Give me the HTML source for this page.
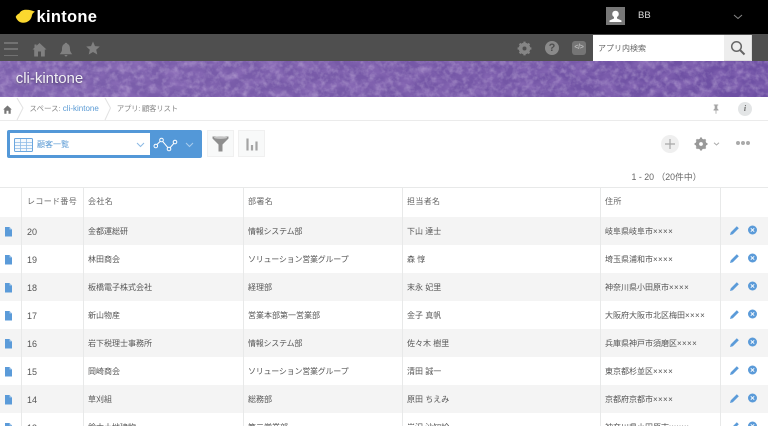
<!DOCTYPE html>
<html lang="ja"><head><meta charset="utf-8"><title>cli-kintone</title>
<style>
*{box-sizing:border-box}
html,body{margin:0;padding:0;width:768px;height:426px;overflow:hidden;background:#fff}
body{position:relative;font-family:"Liberation Sans","Noto Sans CJK JP",sans-serif;color:#555;font-size:8px;filter:blur(.35px)}
.a{position:absolute}
.t{position:absolute;white-space:nowrap;line-height:12px}
svg{position:absolute;overflow:visible}
.row{position:absolute;left:0;width:768px;height:28px}
.row.g{background:#f4f4f4}
.row .t{top:8.5px;color:#555;font-size:8px}
.row .n{font-size:9px;left:27px}
.row .k{letter-spacing:-.23px}
.row i{font-style:normal;letter-spacing:.35px}
.h{top:196px;font-size:8px;letter-spacing:.35px;color:#666}
.vl{position:absolute;top:187px;height:239px;width:1px;background:#e8e9e9}
</style></head><body>

<div class="a" style="left:0;top:0;width:768px;height:34px;background:#000"></div>
<svg style="left:15px;top:9px" width="21" height="15" viewBox="0 0 21 15"><path d="M.7 7.800C1.500 6 3 5 4.500 4.200C5.500 1.800 8.500 .6 11.500 .8C14.500 .8 17 1.400 20 2.800C18.500 3.500 17.500 4.500 17 6C16.500 10.500 13 13.800 8 13.800C4.500 13.800 1.500 11 .7 7.800Z" fill="#fbd82f"/></svg>
<div class="t" style="left:36.500px;top:6.500px;line-height:20px;color:#fff;font-size:16.500px;font-weight:700;letter-spacing:.3px">kintone</div>

<div class="a" style="left:606px;top:7px;width:19px;height:18px;background:#777"></div>
<svg style="left:606px;top:7px" width="19" height="18" viewBox="0 0 19 18"><circle cx="9.500" cy="7" r="3.300" fill="#fff"/><path d="M8 9.500V11.500L3.500 13.500V15H15.500V13.500L11 11.500V9.500Z" fill="#fff"/></svg>
<div class="t" style="left:638px;top:10px;color:#ddd;font-size:9.500px">BB</div>
<svg style="left:733px;top:14px" width="10" height="6" viewBox="0 0 10 6"><path d="M1 1L5 4.500L9 1" fill="none" stroke="#888" stroke-width="1"/></svg>

<div class="a" style="left:0;top:34px;width:768px;height:27px;background:#4f4f4f"></div>
<div class="a" style="left:4px;top:42px;width:14px;height:1.500px;background:#727272"></div>
<div class="a" style="left:4px;top:48px;width:14px;height:1.500px;background:#727272"></div>
<div class="a" style="left:4px;top:54.500px;width:14px;height:1.500px;background:#727272"></div>
<svg style="left:31.500px;top:41.500px" width="15" height="15" viewBox="0 0 15 15"><path d="M7.500 1L14.500 7.500H12.800V14.500H9V9.500H6V14.500H2.200V7.500H.5L2.500 5.600V2.500H4.500V3.800Z" fill="#808080"/></svg>
<svg style="left:59px;top:41.500px" width="14" height="15" viewBox="0 0 14 15"><path d="M7 .8C8 .8 8.300 1.300 8.300 1.900C10.500 2.600 11 4.800 11 7.500C11 9.800 12.500 11 13.300 12.300H.7C1.500 11 3 9.800 3 7.500C3 4.800 3.500 2.600 5.700 1.900C5.700 1.300 6 .8 7 .8ZM5.500 13H8.500C8.300 14 7.700 14.500 7 14.500C6.300 14.500 5.700 14 5.500 13Z" fill="#808080"/></svg>
<svg style="left:86px;top:41px" width="14" height="14" viewBox="0 0 14 14"><path d="M7 .5L9 5.100L13.800 5.500L10.200 8.700L11.300 13.500L7 11L2.700 13.500L3.800 8.700L.2 5.500L5 5.100Z" fill="#808080"/></svg>

<svg style="left:517px;top:41px" width="15" height="15" viewBox="0 0 15 15"><circle cx="7.500" cy="7.500" r="4.300" fill="none" stroke="#858585" stroke-width="3"/><path d="M7.500 .6V14.400M.6 7.500H14.400M2.600 2.600L12.400 12.400M12.400 2.600L2.600 12.400" stroke="#858585" stroke-width="2.200"/><circle cx="7.500" cy="7.500" r="2" fill="#4f4f4f"/></svg>
<div class="a" style="left:545px;top:41px;width:14px;height:14px;border-radius:50%;background:#8a8a8a;color:#4f4f4f;font-size:11px;font-weight:700;line-height:14px;text-align:center">?</div>
<div class="a" style="left:572px;top:41px;width:14px;height:14px;border-radius:3px;background:#757575;color:#bbb;font-size:7px;font-weight:700;line-height:14px;text-align:center;letter-spacing:-.3px">&lt;/&gt;</div>
<div class="a" style="left:724px;top:34.500px;width:27.500px;height:26.500px;background:#ededed;border-bottom:1px solid #ddd;border-right:1px solid #ddd"></div>
<div class="a" style="left:592.500px;top:34.500px;width:131.500px;height:26.500px;background:#fff"></div>
<div class="t" style="left:598px;top:42.500px;color:#666;font-size:8px">アプリ内検索</div>
<svg style="left:730px;top:40px" width="16" height="16" viewBox="0 0 16 16"><circle cx="6.500" cy="6.500" r="4.800" fill="none" stroke="#666" stroke-width="1.500"/><path d="M10 10L14.500 14.500" stroke="#666" stroke-width="2"/></svg>

<div class="a" style="left:0;top:61px;width:768px;height:36px;overflow:hidden">
<svg style="left:0;top:0" width="768" height="36"><defs><linearGradient id="lg" x1="0" x2="1" y1="0" y2="0"><stop offset="0" stop-color="#7c60ac"/><stop offset=".55" stop-color="#7658a7"/><stop offset="1" stop-color="#6d4fa3"/></linearGradient><filter id="f" x="0" y="0" width="100%" height="100%"><feTurbulence type="fractalNoise" baseFrequency=".06 .1" numOctaves="4" seed="7"/><feColorMatrix values="0 0 0 0 .36  0 0 0 0 .22  0 0 0 0 .58  1 0 0 0 -.38"/></filter><filter id="f2" x="0" y="0" width="100%" height="100%"><feTurbulence type="fractalNoise" baseFrequency=".16" numOctaves="3" seed="21"/><feColorMatrix values="0 0 0 0 .62  0 0 0 0 .52  0 0 0 0 .76  .9 0 0 0 -.38"/></filter></defs><rect width="768" height="36" fill="url(#lg)"/><rect width="768" height="36" filter="url(#f)"/><rect width="768" height="36" filter="url(#f2)"/></svg>
</div>
<div class="t" style="left:15.700px;top:68.500px;line-height:19px;color:#f2f0f6;font-size:15px;text-shadow:0 1px 2px rgba(0,0,0,.4)">cli-kintone</div>

<div class="a" style="left:0;top:97px;width:768px;height:24px;background:#fff;border-bottom:1px solid #ebebeb"></div>
<svg style="left:3px;top:104.500px" width="9" height="9" viewBox="0 0 9 9"><path d="M4.500 .5L8.800 4.500H7.700V8.700H5.500V5.700H3.500V8.700H1.300V4.500H.2Z" fill="#777"/></svg>
<svg style="left:15px;top:97px" width="100" height="24" viewBox="0 0 100 24"><path d="M2 1L8 11L2 23M90 1L95.500 11L90 23" fill="none" stroke="#e2e2e2"/></svg>
<div class="t" style="left:29.500px;top:103px;color:#888;font-size:7.500px">スペース: <span style="color:#5b9bd5;font-size:8px">cli-kintone</span></div>
<div class="t" style="left:116.700px;top:103px;color:#888;font-size:7.500px;letter-spacing:-.3px">アプリ: 顧客リスト</div>
<svg style="left:712.500px;top:104px" width="6" height="10" viewBox="0 0 6 10"><path d="M.8 .5H5.200V1.500H4.300V4.500L5.500 5.800V6.500H3.400V9.800H2.600V6.500H.5V5.800L1.700 4.500V1.500H.8Z" fill="#a5a5a5"/></svg>
<div class="a" style="left:738px;top:102px;width:14px;height:14px;border-radius:50%;background:#e3e5e6;color:#666;font:italic 700 8px/14px 'Liberation Serif',serif;text-align:center">i</div>

<div class="a" style="left:6.500px;top:130px;width:195.500px;height:27.500px;background:#5398d8;border-radius:2px"></div>
<div class="a" style="left:9.500px;top:133px;width:140px;height:21.500px;background:#fff"></div>
<svg style="left:14px;top:137.500px" width="19" height="14" viewBox="0 0 19 14"><rect x=".5" y=".5" width="18" height="13" rx="1" fill="#f4f9fd" stroke="#6aa6de"/><path d="M1 4.500H18M1 7.500H18M1 10.500H18M6.500 1V13M12.500 1V13" stroke="#8dbbe6" stroke-width=".8"/></svg>
<div class="t" style="left:37px;top:138.500px;color:#5b9bd5;font-size:8px">顧客一覧</div>
<svg style="left:136px;top:142px" width="9" height="6" viewBox="0 0 9 6"><path d="M1 1L4.500 4.500L8 1" fill="none" stroke="#8bb9e4"/></svg>
<svg style="left:154px;top:136px" width="24" height="16" viewBox="0 0 24 16"><path d="M1.500 10L7.500 4L15 13L21 6" fill="none" stroke="#fff"/><g fill="#5398d8" stroke="#fff"><circle cx="1.800" cy="10" r="1.800"/><circle cx="7.500" cy="4" r="1.800"/><circle cx="15" cy="13" r="1.800"/><circle cx="21" cy="6" r="1.800"/></g></svg>
<svg style="left:185px;top:142px" width="9" height="6" viewBox="0 0 9 6"><path d="M1 1L4.500 4.500L8 1" fill="none" stroke="#a9cdee"/></svg>

<div class="a" style="left:206.500px;top:130px;width:27px;height:27px;background:#f8f9f9;border:1px solid #f0f0f0"></div>
<svg style="left:211.500px;top:135px" width="17" height="17" viewBox="0 0 17 17"><path d="M.5 1.500H16.500V3.500L10.500 9.500V16.500H6.500V9.500L.5 3.500Z" fill="#8f8f8f"/><ellipse cx="8.500" cy="2.600" rx="6.500" ry="1.300" fill="#c4c4c4"/></svg>
<div class="a" style="left:238px;top:130px;width:27px;height:27px;background:#f8f9f9;border:1px solid #f0f0f0"></div>
<svg style="left:246px;top:137.500px" width="12" height="13" viewBox="0 0 12 13"><path d="M1.500 .5V12.500M6 7V12.500M10.500 3.500V12.500" stroke="#a4a4a4" stroke-width="2.200"/></svg>

<div class="a" style="left:661px;top:134.500px;width:18px;height:18px;border-radius:50%;background:#efefef"></div>
<svg style="left:665px;top:138.500px" width="10" height="10" viewBox="0 0 10 10"><path d="M5 0V10M0 5H10" stroke="#a8a8a8" stroke-width="1.200"/></svg>
<svg style="left:694px;top:136.500px" width="14" height="14" viewBox="0 0 15 15"><circle cx="7.500" cy="7.500" r="4.300" fill="none" stroke="#999" stroke-width="3"/><path d="M7.500 .6V14.400M.6 7.500H14.400M2.600 2.600L12.400 12.400M12.400 2.600L2.600 12.400" stroke="#999" stroke-width="2.200"/><circle cx="7.500" cy="7.500" r="2" fill="#fff"/></svg>
<svg style="left:712.500px;top:142px" width="7" height="4" viewBox="0 0 7 4"><path d="M1 .8L3.500 3L6 .8" fill="none" stroke="#aaa"/></svg>
<div class="a" style="left:735.600px;top:141.300px;width:4px;height:4px;border-radius:50%;background:#aaa"></div>
<div class="a" style="left:740.700px;top:141.300px;width:4px;height:4px;border-radius:50%;background:#aaa"></div>
<div class="a" style="left:745.700px;top:141.300px;width:4px;height:4px;border-radius:50%;background:#aaa"></div>

<div class="t" style="left:631.500px;top:171px;color:#666;font-size:8.800px">1 - 20 （20件中）</div>

<div class="a" style="left:0;top:187px;width:768px;height:1px;background:#e8e9e9"></div>
<div class="t h" style="left:27px">レコード番号</div>
<div class="t h" style="left:88px">会社名</div>
<div class="t h" style="left:248px">部署名</div>
<div class="t h" style="left:407px">担当者名</div>
<div class="t h" style="left:605px">住所</div>

<div class="row g" style="top:217px"><div class="t n">20</div><div class="t" style="left:88px">金都運総研</div><div class="t k" style="left:248px">情報システム部</div><div class="t" style="left:407px">下山 達士</div><div class="t" style="left:605px">岐阜県岐阜市<i>××××</i></div></div>
<div class="row" style="top:245px"><div class="t n">19</div><div class="t" style="left:88px">林田商会</div><div class="t k" style="left:248px">ソリューション営業グループ</div><div class="t" style="left:407px">森 惇</div><div class="t" style="left:605px">埼玉県浦和市<i>××××</i></div></div>
<div class="row g" style="top:273px"><div class="t n">18</div><div class="t" style="left:88px">板橋電子株式会社</div><div class="t" style="left:248px">経理部</div><div class="t" style="left:407px">末永 妃里</div><div class="t" style="left:605px">神奈川県小田原市<i>××××</i></div></div>
<div class="row" style="top:301px"><div class="t n">17</div><div class="t" style="left:88px">新山物産</div><div class="t" style="left:248px">営業本部第一営業部</div><div class="t" style="left:407px">金子 真帆</div><div class="t" style="left:605px">大阪府大阪市北区梅田<i>××××</i></div></div>
<div class="row g" style="top:329px"><div class="t n">16</div><div class="t" style="left:88px">岩下税理士事務所</div><div class="t k" style="left:248px">情報システム部</div><div class="t" style="left:407px">佐々木 樹里</div><div class="t" style="left:605px">兵庫県神戸市須磨区<i>××××</i></div></div>
<div class="row" style="top:357px"><div class="t n">15</div><div class="t" style="left:88px">岡崎商会</div><div class="t k" style="left:248px">ソリューション営業グループ</div><div class="t" style="left:407px">清田 誠一</div><div class="t" style="left:605px">東京都杉並区<i>××××</i></div></div>
<div class="row g" style="top:385px"><div class="t n">14</div><div class="t" style="left:88px">草刈組</div><div class="t" style="left:248px">総務部</div><div class="t" style="left:407px">原田 ちえみ</div><div class="t" style="left:605px">京都府京都市<i>××××</i></div></div>
<div class="row" style="top:413px"><div class="t n">13</div><div class="t" style="left:88px">鈴木土地建物</div><div class="t" style="left:248px">第二営業部</div><div class="t" style="left:407px">岩沢 沙知絵</div><div class="t" style="left:605px">神奈川県小田原市<i>××××</i></div></div>

<div class="vl" style="left:21px"></div>
<div class="vl" style="left:83px"></div>
<div class="vl" style="left:243px"></div>
<div class="vl" style="left:402px"></div>
<div class="vl" style="left:600px"></div>
<div class="vl" style="left:720px"></div>

<svg style="left:0;top:0" width="768" height="426">
<defs>
<g id="d"><path d="M0 0H4.500L7 2.500V9.500H0Z" fill="#5b9bd9"/><path d="M4.500 0L7 2.500H4.500Z" fill="#a8cbec"/></g>
<g id="p"><path d="M0 9.500L.8 6.800L6.800 .8L8.800 2.800L2.800 8.800Z" fill="#5b9bd9"/></g>
<g id="x"><circle cx="4.500" cy="4.500" r="4.500" fill="#5b9bd9"/><path d="M2.800 2.800L6.200 6.200M6.200 2.800L2.800 6.200" stroke="#fff" stroke-width=".9"/></g>
</defs>
<use href="#d" x="5" y="227"/><use href="#d" x="5" y="255"/><use href="#d" x="5" y="283"/><use href="#d" x="5" y="311"/><use href="#d" x="5" y="339"/><use href="#d" x="5" y="367"/><use href="#d" x="5" y="395"/><use href="#d" x="5" y="423"/>
<use href="#p" x="730" y="225.500"/><use href="#p" x="730" y="253.500"/><use href="#p" x="730" y="281.500"/><use href="#p" x="730" y="309.500"/><use href="#p" x="730" y="337.500"/><use href="#p" x="730" y="365.500"/><use href="#p" x="730" y="393.500"/><use href="#p" x="730" y="421.500"/>
<use href="#x" x="748" y="225.500"/><use href="#x" x="748" y="253.500"/><use href="#x" x="748" y="281.500"/><use href="#x" x="748" y="309.500"/><use href="#x" x="748" y="337.500"/><use href="#x" x="748" y="365.500"/><use href="#x" x="748" y="393.500"/><use href="#x" x="748" y="421.500"/>
</svg>
</body></html>
